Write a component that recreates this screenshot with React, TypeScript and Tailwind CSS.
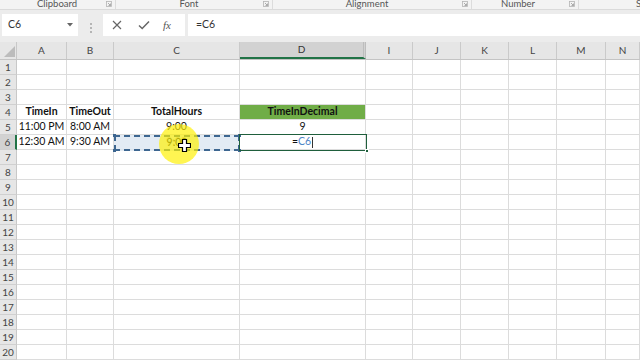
import React from "react";

const COLS = [
  { l: "A", w: 50 },
  { l: "B", w: 47 },
  { l: "C", w: 126 },
  { l: "D", w: 126 },
  { l: "I", w: 47 },
  { l: "J", w: 48 },
  { l: "K", w: 48 },
  { l: "L", w: 48 },
  { l: "M", w: 49 },
  { l: "N", w: 34 },
];

type Cell = { t: React.ReactNode; bold?: boolean; green?: boolean };

const DATA: Record<number, Record<number, Cell>> = {
  4: {
    0: { t: "TimeIn", bold: true },
    1: { t: "TimeOut", bold: true },
    2: { t: "TotalHours", bold: true },
    3: { t: "TimeInDecimal", bold: true, green: true },
  },
  5: {
    0: { t: "11:00 PM" },
    1: { t: "8:00 AM" },
    2: { t: "9:00" },
    3: { t: "9" },
  },
  6: {
    0: { t: "12:30 AM" },
    1: { t: "9:30 AM" },
    2: { t: "9:00" },
    3: {
      t: (
        <span className="flex items-center">
          <span>=</span>
          <span className="text-[#4f86c6]">C6</span>
          <span className="ml-[1px] inline-block w-px h-[11px] bg-[#333]" />
        </span>
      ),
    },
  },
};

function Launcher() {
  return (
    <svg width="6" height="6" viewBox="0 0 6 6" className="shrink-0">
      <rect x="0.5" y="0.5" width="5" height="5" fill="none" stroke="#b5b5b5" strokeWidth="0.8" />
      <path d="M2 2 L4.5 4.5 M4.5 2.5 V4.5 H2.5" stroke="#999" strokeWidth="0.8" fill="none" />
    </svg>
  );
}

function Group({ label, w, center }: { label: string; w: number; center: number }) {
  return (
    <div className="relative h-full shrink-0 border-r border-[#dcdcdc]" style={{ width: w }}>
      <span
        className="absolute top-[-1px] text-[9.5px] leading-none text-[#555] whitespace-nowrap -translate-x-1/2"
        style={{ left: center }}
      >
        {label}
      </span>
      <span className="absolute right-[3px] top-[1px]">
        <Launcher />
      </span>
    </div>
  );
}

export default function App() {
  const rows = Array.from({ length: 20 }, (_, i) => i + 1);
  return (
    <div className="relative w-[640px] h-[360px] overflow-hidden bg-white font-['Lato',sans-serif] select-none">
      {/* Ribbon labels strip */}
      <div className="flex h-[10px] bg-[#f3f3f3] border-b border-[#dadada] overflow-hidden">
        <Group label="Clipboard" w={116} center={57} />
        <Group label="Font" w={157} center={73} />
        <Group label="Alignment" w={199} center={94} />
        <Group label="Number" w={107} center={46} />
        <div className="relative h-full flex-1">
          <span className="absolute top-[-1px] left-[57px] text-[9.5px] leading-none text-[#555]">Styles</span>
        </div>
      </div>

      {/* Formula bar */}
      <div className="flex h-[32px] bg-[#ececec] pt-[4px]">
        <div className="ml-[2px] w-[76px] h-[22px] bg-white flex items-center justify-between pl-[6px] pr-[5px]">
          <span className="text-[10.5px] text-[#333]">C6</span>
          <svg width="6" height="4" viewBox="0 0 6 4">
            <path d="M0 0 H6 L3 3.5 Z" fill="#666" />
          </svg>
        </div>
        <div className="w-[25px] flex flex-col items-center justify-center gap-[2px]">
          <span className="w-[2px] h-[2px] bg-[#b5b5b5]" />
          <span className="w-[2px] h-[2px] bg-[#b5b5b5]" />
          <span className="w-[2px] h-[2px] bg-[#b5b5b5]" />
        </div>
        <div className="w-[82px] h-[22px] bg-white flex items-center">
          <svg width="10" height="10" viewBox="0 0 10 10" className="ml-[9px]">
            <path d="M1 1 L9 9 M9 1 L1 9" stroke="#666" strokeWidth="1.2" />
          </svg>
          <svg width="12" height="10" viewBox="0 0 12 10" className="ml-[16px]">
            <path d="M1 5.5 L4.2 8.5 L11 1.5" stroke="#666" strokeWidth="1.5" fill="none" />
          </svg>
          <span className="ml-[13px] text-[11px] italic text-[#555] font-['Liberation_Serif',serif]">fx</span>
        </div>
        <div className="ml-[3px] flex-1 h-[22px] bg-white flex items-center pl-[8px]">
          <span className="text-[10.5px] text-[#333]">=C6</span>
        </div>
      </div>

      {/* Column header row */}
      <div className="flex h-[18px] bg-[#e6e6e6] border-b border-[#c4c4c4]">
        <div className="w-[17px] shrink-0 relative border-r border-[#c8c8c8]">
          <svg width="11" height="11" viewBox="0 0 11 11" className="absolute left-[4px] top-[4px]">
            <path d="M11 0 V11 H0 Z" fill="#bcbcbc" />
          </svg>
        </div>
        {COLS.map((c) => {
          const sel = c.l === "D";
          return (
            <div
              key={c.l}
              className={
                "shrink-0 flex items-center justify-center text-[10px] " +
                (sel
                  ? "bg-[#d2d2d2] text-[#333] border-b-2 border-b-[#217346] border-r-[3px] border-r-[#bdbdbd]"
                  : "text-[#444] border-r border-[#cacaca]")
              }
              style={{ width: c.w, borderRightStyle: sel ? "double" : "solid", borderBottomStyle: "solid" }}
            >
              {c.l}
            </div>
          );
        })}
      </div>

      {/* Grid rows */}
      {rows.map((r) => (
        <div key={r} className="flex h-[15px]">
          <div
            className={
              "w-[17px] shrink-0 flex items-center justify-center text-[10px] text-[#444] border-b border-[#d0d0d0] " +
              (r === 6 ? "bg-[#d2d2d2] border-r-2 border-r-[#217346]" : "bg-[#e6e6e6] border-r border-r-[#c8c8c8]")
            }
          >
            {r}
          </div>
          {COLS.map((c, ci) => {
            const cell = DATA[r]?.[ci];
            return (
              <div
                key={c.l}
                className={
                  "shrink-0 flex items-center justify-center border-r border-b border-[#dcdcdc] text-[10.5px] text-[#111] whitespace-nowrap " +
                  (cell?.green ? "bg-[#70ad47] " : "") +
                  (cell?.bold ? "font-bold " : "")
                }
                style={{ width: c.w }}
              >
                {cell?.t}
              </div>
            );
          })}
        </div>
      ))}

      {/* C6 reference selection (dashed) */}
      <div className="absolute left-[114px] top-[135px] w-[126px] h-[16px] bg-[#dce6f1]/80 border-2 border-dashed border-[#3d6690]">
        <span className="absolute -left-[3px] -top-[3px] w-[3px] h-[3px] bg-[#3d6690]" />
        <span className="absolute -right-[3px] -top-[3px] w-[3px] h-[3px] bg-[#3d6690]" />
        <span className="absolute -left-[3px] -bottom-[3px] w-[3px] h-[3px] bg-[#3d6690]" />
        <span className="absolute -right-[3px] -bottom-[3px] w-[3px] h-[3px] bg-[#3d6690]" />
      </div>
      <div className="absolute left-[114px] top-[135px] w-[126px] h-[15px] flex items-center justify-center text-[10.5px] text-[#111]">
        9:00
      </div>

      {/* D6 active cell */}
      <div className="absolute left-[239px] top-[134px] w-[128px] h-[17px] border-[1.5px] border-[#1f5f3c]">
        <span className="absolute -right-[3px] -bottom-[3px] w-[4px] h-[4px] bg-[#1f5f3c] border border-white" />
      </div>

      {/* Yellow cursor highlight */}
      <div className="absolute left-[159px] top-[124px] w-[40px] h-[40px] rounded-full bg-[rgba(255,240,0,0.68)]" />

      {/* Cross cursor */}
      <svg width="13" height="13" viewBox="0 0 13 13" className="absolute left-[178px] top-[139px]">
        <path
          d="M4.5 0.5 H8.5 V4.5 H12.5 V8.5 H8.5 V12.5 H4.5 V8.5 H0.5 V4.5 H4.5 Z"
          fill="white"
          stroke="black"
          strokeWidth="1.2"
        />
      </svg>
    </div>
  );
}
